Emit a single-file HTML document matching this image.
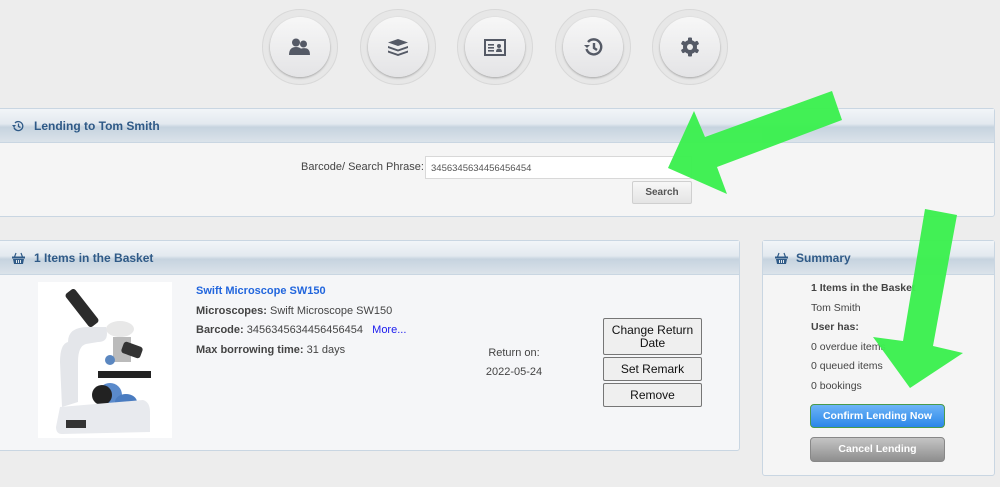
<!DOCTYPE html>
<html><head><meta charset="utf-8"><style>
*{margin:0;padding:0;box-sizing:border-box}
body{width:1000px;height:487px;overflow:hidden;position:relative;background:#ededed;font-family:"Liberation Sans",Arial,sans-serif;font-size:11px;color:#333}
.a{position:absolute}
.circ{position:absolute;width:76px;height:76px;border-radius:50%;background:#e7e7e7;border:1px solid #d8d8d8;top:9px}
.circ .in{position:absolute;left:7px;top:7px;width:60px;height:60px;border-radius:50%;background:linear-gradient(#f7f7f7,#e4e4e6);box-shadow:0 1px 2px rgba(0,0,0,.3);display:flex;align-items:center;justify-content:center}
.panel{position:absolute;background:#f5f5f5;border:1px solid #c9d6e2;border-radius:3px}
.hd{height:34px;background:linear-gradient(#f2f5f8 0%,#e3e9ef 45%,#c6d3df 55%,#dbe3ea 100%);border-bottom:1px solid #c9d6e2;color:#2f5a87;font-weight:bold;font-size:12px;line-height:34px;padding-left:33px;position:relative}
.hd svg{position:absolute;left:12px;top:11px}
.btn{position:absolute;background:#efefef;border:1px solid #767676;border-radius:2px;font-size:12px;color:#111;text-align:center}
</style></head><body>
<div class="circ" style="left:262px"><div class="in"><svg width="22" height="18" viewBox="0 0 22 18" fill="#555a66"><circle cx="7" cy="4.5" r="4"/><path d="M0 17 Q0 9 7 9 Q14 9 14 17Z"/><circle cx="14.5" cy="6" r="3.5"/><path d="M11 17 L11 11 Q14 9.5 18 10.5 Q21 12 21 17Z"/></svg></div></div>
<div class="circ" style="left:360px"><div class="in"><svg width="22" height="18" viewBox="0 0 22 18" fill="#555a66"><path d="M11 1 L21 4.5 L11 8 L1 4.5Z"/><path d="M1 8 L11 11.5 L21 8 L21 10 L11 13.5 L1 10Z"/><path d="M1 12.5 L11 16 L21 12.5 L21 14.5 L11 18 L1 14.5Z"/></svg></div></div>
<div class="circ" style="left:457px"><div class="in"><svg width="22" height="17" viewBox="0 0 22 17"><rect x="1" y="1" width="20" height="15" fill="none" stroke="#555a66" stroke-width="2"/><rect x="4" y="5" width="6" height="1.6" fill="#555a66"/><rect x="4" y="8" width="6" height="1.6" fill="#555a66"/><rect x="4" y="11" width="6" height="1.6" fill="#555a66"/><circle cx="15" cy="7" r="2" fill="#555a66"/><path d="M12 13 Q12 9.5 15 9.5 Q18 9.5 18 13Z" fill="#555a66"/></svg></div></div>
<div class="circ" style="left:555px"><div class="in"><svg width="20" height="20" viewBox="0 0 20 20" fill="none" stroke="#555a66" stroke-width="2.4"><path d="M5 5 A7.5 7.5 0 1 1 3.5 12"/><path d="M11 6 V11 L14 13"/><path d="M1 8 L4 11 L7 8" fill="#555a66" stroke="none"/></svg></div></div>
<div class="circ" style="left:652px"><div class="in"><svg width="20" height="20" viewBox="0 0 20 20"><g fill="#555a66"><circle cx="10" cy="10" r="7"/><g><rect x="8" y="0.5" width="4" height="19" rx="1"/><rect x="8" y="0.5" width="4" height="19" rx="1" transform="rotate(60 10 10)"/><rect x="8" y="0.5" width="4" height="19" rx="1" transform="rotate(120 10 10)"/></g></g><circle cx="10" cy="10" r="3" fill="#eee"/></svg></div></div>

<div class="panel" style="left:-3px;top:108px;width:998px;height:109px">
<div class="hd" style="padding-left:36px"><svg style="left:14px" width="12" height="12" viewBox="0 0 12 12" fill="none" stroke="#2f5a87" stroke-width="1.3"><path d="M3 3 A4.5 4.5 0 1 1 2 7.5"/><path d="M6.5 3.5V6.5L8.5 7.5"/><path d="M0 5 L2 7.5 L4 5" fill="#2f5a87" stroke="none"/></svg>Lending to Tom Smith</div>
</div>
<div class="a" style="left:301px;top:161px;font-size:11px;color:#444">Barcode/ Search Phrase:</div>
<div class="a" style="left:425px;top:156px;width:267px;height:23px;background:#fff;border:1px solid #d8d8d8;font-size:9.5px;color:#555;padding:6px 5px">3456345634456456454</div>
<div class="a" style="left:632px;top:181px;width:60px;height:23px;background:linear-gradient(#f7f7f7,#e4e4e4);border:1px solid #cfcfcf;border-radius:2px;font-size:10px;font-weight:bold;color:#555;text-align:center;line-height:21px">Search</div>

<div class="panel" style="left:-3px;top:240px;width:743px;height:211px;background:#f5f6f8">
<div class="hd" style="padding-left:36px"><svg style="left:14px" width="13" height="12" viewBox="0 0 13 12" fill="#2f5a87"><path d="M4 1 L2.5 5 M9 1 L10.5 5" stroke="#2f5a87" stroke-width="1.2"/><rect x="0" y="4.5" width="13" height="2"/><path d="M1 7 H12 L11 12 H2Z"/><path d="M4.5 8 V11 M6.5 8 V11 M8.5 8V11" stroke="#dfe6ec" stroke-width="1"/></svg>1 Items in the Basket</div>
</div>
<div class="a" style="left:38px;top:282px;width:134px;height:156px;background:#fff">
<svg width="134" height="156" viewBox="0 0 134 156">
<rect x="38" y="5" width="12" height="42" rx="3" transform="rotate(-38 44 26)" fill="#2b2b2b"/>
<ellipse cx="82" cy="47" rx="14" ry="8" fill="#e8e8e8"/>
<path d="M30 60 Q30 45 50 45 L68 45 Q72 60 60 60 L48 62 Q40 64 40 80 L40 120 L24 125 L22 80 Q22 62 30 60Z" fill="#e4e6ea"/>
<rect x="75" y="55" width="18" height="25" fill="#bbb"/>
<rect x="84" y="62" width="20" height="12" rx="3" fill="#333" transform="rotate(20 94 68)"/>
<circle cx="72" cy="78" r="5" fill="#5b87c0"/>
<rect x="60" y="89" width="53" height="7" fill="#222"/>
<circle cx="72" cy="113" r="12" fill="#5a8acb"/><circle cx="64" cy="113" r="10" fill="#222"/>
<ellipse cx="88" cy="120" rx="11" ry="8" fill="#4a7cc0"/>
<path d="M22 125 L105 118 Q112 120 112 130 L112 150 L24 152 Q18 152 18 145Z" fill="#e8eaee"/>
<rect x="28" y="138" width="20" height="8" fill="#333"/>
</svg></div>
<div class="a" style="left:196px;top:285px;font-weight:bold;color:#2266dd;font-size:11px">Swift Microscope SW150</div>
<div class="a" style="left:196px;top:305px;color:#444"><b>Microscopes:</b> Swift Microscope SW150</div>
<div class="a" style="left:196px;top:324px;color:#444"><b>Barcode:</b> 3456345634456456454 &nbsp;&nbsp;<span style="color:#1a1aee">More...</span></div>
<div class="a" style="left:196px;top:344px;color:#444"><b>Max borrowing time:</b> 31 days</div>
<div class="a" style="left:474px;top:347px;color:#444;width:80px;text-align:center;white-space:nowrap">Return on:</div>
<div class="a" style="left:474px;top:366px;color:#444;width:80px;text-align:center;white-space:nowrap">2022-05-24</div>
<div class="btn" style="left:603px;top:318px;width:99px;height:37px;padding-top:5px;line-height:13px">Change Return<br>Date</div>
<div class="btn" style="left:603px;top:357px;width:99px;height:24px;line-height:22px">Set Remark</div>
<div class="btn" style="left:603px;top:383px;width:99px;height:24px;line-height:22px">Remove</div>

<div class="panel" style="left:762px;top:240px;width:233px;height:236px">
<div class="hd"><svg width="13" height="12" viewBox="0 0 13 12" fill="#2f5a87"><path d="M4 1 L2.5 5 M9 1 L10.5 5" stroke="#2f5a87" stroke-width="1.2"/><rect x="0" y="4.5" width="13" height="2"/><path d="M1 7 H12 L11 12 H2Z"/><path d="M4.5 8 V11 M6.5 8 V11 M8.5 8V11" stroke="#dfe6ec" stroke-width="1"/></svg>Summary</div>
</div>
<div class="a" style="left:811px;top:279px;color:#444;line-height:19.5px;font-size:10.5px"><b>1 Items in the Basket</b><br>Tom Smith<br><b>User has:</b><br>0 overdue items<br>0 queued items<br>0 bookings</div>
<div class="a" style="left:810px;top:404px;width:135px;height:24px;border-radius:4px;background:linear-gradient(#6db4f7,#2a86e8);border:1px solid #4a9a4a;color:#fff;font-weight:bold;font-size:10.5px;text-align:center;line-height:22px">Confirm Lending Now</div>
<div class="a" style="left:810px;top:437px;width:135px;height:25px;border-radius:4px;background:linear-gradient(#c4c4c4,#8e8e8e);border:1px solid #888;color:#fff;font-weight:bold;font-size:10.5px;text-align:center;line-height:23px">Cancel Lending</div>

<svg class="a" style="left:0;top:0" width="1000" height="487"><g fill="#3cf050" opacity="0.97">
<polygon points="832,91 842,120 717,167 727,194 668,168 694,111 705,137"/>
<polygon points="925,209 957,215 933,346 963,353 910,388 873,337 903,341"/>
</g></svg>
</body></html>
